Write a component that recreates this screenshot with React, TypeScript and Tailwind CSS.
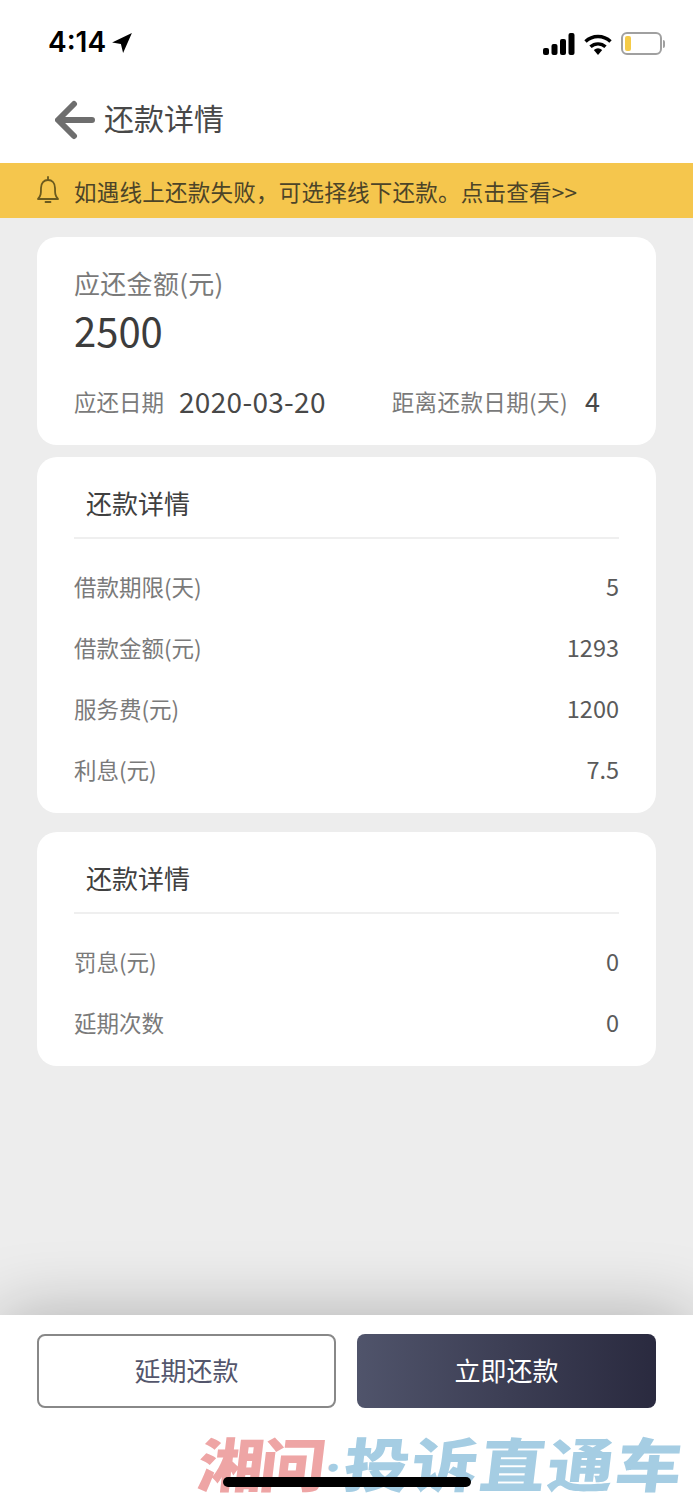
const cjk = "font-['Noto_Sans_CJK_SC','Noto_Sans',sans-serif]";

type Row = { label: string; value: string };

const loanRows: Row[] = [
  { label: "借款期限(天)", value: "5" },
  { label: "借款金额(元)", value: "1293" },
  { label: "服务费(元)", value: "1200" },
  { label: "利息(元)", value: "7.5" },
];

const lateRows: Row[] = [
  { label: "罚息(元)", value: "0" },
  { label: "延期次数", value: "0" },
];

function StatusBar() {
  return (
    <div className="flex h-[80px] items-start justify-between pl-[48px] pr-[28px] pt-[24px]">
      <div className="flex items-center gap-[5px]">
        <span className="font-['Inter',sans-serif] text-[28px] font-semibold leading-[36px] text-black">4:14</span>
        <svg width="22" height="22" viewBox="0 0 20 20" className="mt-[2px]">
          <path d="M19 1 L1 9.5 L9 11 L11 19 Z" fill="#000" />
        </svg>
      </div>
      <div className="mt-[8px] flex items-center gap-[9px]">
        <svg width="32" height="22" viewBox="0 0 32 22">
          <rect x="0" y="15" width="6" height="7" rx="2" fill="#000" />
          <rect x="8.5" y="11" width="6" height="11" rx="2" fill="#000" />
          <rect x="17" y="6" width="6" height="16" rx="2" fill="#000" />
          <rect x="25.5" y="0" width="6" height="22" rx="2" fill="#000" />
        </svg>
        <svg width="28" height="22" viewBox="0 0 28 22">
          <path d="M14 22 L9.8 17 A6.5 6.5 0 0 1 18.2 17 Z" fill="#000" />
          <path d="M6.5 13.8 A11 11 0 0 1 21.5 13.8" fill="none" stroke="#000" stroke-width="3.4" />
          <path d="M1.5 8.5 A18 18 0 0 1 26.5 8.5" fill="none" stroke="#000" stroke-width="3.4" />
        </svg>
        <div className="flex items-center">
          <div className="flex h-[23px] w-[41px] items-center rounded-[6px] border-2 border-[#a0a0a0] px-[2px]">
            <div className="h-[15px] w-[6px] rounded-[2px] bg-[#f5cb48]" />
          </div>
          <div className="ml-[1px] h-[8px] w-[2px] rounded-r-[2px] bg-[#a0a0a0]" />
        </div>
      </div>
    </div>
  );
}

function Header() {
  return (
    <div className="flex h-[83px] items-center pl-[55px]">
      <svg width="42" height="42" viewBox="0 0 42 42" className="mt-[-4px]">
        <path d="M37 21 H4 M19 5 L3 21 L19 37" fill="none" stroke="#6e6e6e" stroke-width="6" stroke-linecap="round" stroke-linejoin="round" />
      </svg>
      <h1 className="ml-[7px] mt-[-10px] text-[30px] font-normal leading-[40px] text-[#484848]">还款详情</h1>
    </div>
  );
}

function Notice() {
  return (
    <div className="flex h-[55px] items-center bg-[#f5c64d] pl-[36px]">
      <svg width="24" height="32" viewBox="0 0 24 32" fill="none" stroke="#6b5a1e" stroke-width="1.8">
        <path d="M2 24 C5 21 5 18 5 13 C5 8 8 5 12 5 C16 5 19 8 19 13 C19 18 19 21 22 24 Z" strokeLinejoin="round" />
        <path d="M12 2 V5 M9.5 27 H14.5" strokeLinecap="round" />
      </svg>
      <span className="ml-[14px] text-[22.5px] leading-[30px] tracking-[0.25px] text-[#4c4428]">如遇线上还款失败，可选择线下还款。点击查看&gt;&gt;</span>
    </div>
  );
}

function DetailCard({ rows, className }: { rows: Row[]; className: string }) {
  return (
    <section className={`mx-[37px] rounded-[20px] bg-white px-[37px] pb-[13px] ${className}`}>
      <div className="flex h-[82px] items-center border-b-2 border-[#efefef] pl-[12px] pt-[12px]">
        <h2 className="text-[26px] font-normal leading-[36px] text-[#404040]">还款详情</h2>
      </div>
      <div className="pt-[17px]">
        {rows.map((r) => (
          <div key={r.label} className="flex h-[61px] items-center justify-between text-[22.5px]">
            <span className="text-[#7a7a7a]">{r.label}</span>
            <span className="text-[23.5px] text-[#5a5a5a]">{r.value}</span>
          </div>
        ))}
      </div>
    </section>
  );
}

export default function App() {
  return (
    <div className={`relative flex h-[1500px] w-[693px] flex-col overflow-hidden bg-white ${cjk}`}>
      <StatusBar />
      <Header />
      <Notice />
      <main className="flex-1 bg-[#ededed] pt-[19px]">
        <section className="mx-[37px] h-[208px] rounded-[20px] bg-white px-[37px] pt-[28px]">
          <p className="text-[26px] leading-[36px] tracking-[0.3px] text-[#7a7a7a]">应还金额(元)</p>
          <p className="mt-[4px] text-[40px] leading-[50px] text-[#3c3c3c]">2500</p>
          <div className="mt-[28px] flex items-center justify-between pr-[19px]">
            <div className="flex items-center">
              <span className="text-[22.5px] leading-[36px] text-[#7a7a7a]">应还日期</span>
              <span className="ml-[15px] text-[28px] leading-[36px] tracking-[0.3px] text-[#484848]">2020-03-20</span>
            </div>
            <div className="flex items-center">
              <span className="text-[22.5px] leading-[36px] tracking-[0.4px] text-[#7a7a7a]">距离还款日期(天)</span>
              <span className="ml-[17px] text-[27px] leading-[36px] text-[#484848]">4</span>
            </div>
          </div>
        </section>
        <DetailCard rows={loanRows} className="mt-[12px]" />
        <DetailCard rows={lateRows} className="mt-[19px]" />
      </main>
      <div className="relative flex h-[185px] gap-[21px] bg-white px-[37px] pt-[19px] shadow-[0_0_70px_rgba(0,0,0,0.27)]">
        <button className="h-[74px] w-[299px] rounded-[8px] border-2 border-[#888] bg-white pb-[4px] text-[26px] text-[#54566c]">延期还款</button>
        <button className="h-[74px] w-[299px] rounded-[8px] bg-gradient-to-r from-[#50546b] to-[#2a2a3f] pb-[4px] text-[26px] text-white">立即还款</button>
      </div>
      <div className="absolute left-[198px] top-[1434px] flex h-[66px] -skew-x-6 scale-y-[0.88] items-center font-['Liberation_Sans','Noto_Sans_CJK_SC',sans-serif] text-[66px] font-black leading-[66px] whitespace-nowrap">
        <span className="tracking-[-4px] text-[#eea5a5]">湘问</span>
        <span className="mx-[2px] w-[18px] text-center text-[32px] text-[#a5cde3]">•</span>
        <span className="tracking-[2px] text-[#a5cde3]">投诉直通车</span>
      </div>
      <div className="absolute left-[223px] top-[1477px] h-[10px] w-[248px] rounded-full bg-black" />
    </div>
  );
}
